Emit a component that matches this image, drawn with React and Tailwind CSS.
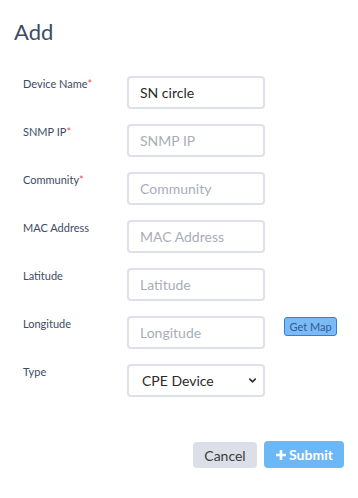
import React from "react";
import { ChevronDown } from "lucide-react";

const fields = [
  { label: "Device Name", required: true, value: "SN circle" },
  { label: "SNMP IP", required: true, placeholder: "SNMP IP" },
  { label: "Community", required: true, placeholder: "Community" },
  { label: "MAC Address", placeholder: "MAC Address" },
  { label: "Latitude", placeholder: "Latitude" },
  { label: "Longitude", placeholder: "Longitude", map: true },
];

const App = () => {
  return (
    <div
      className="w-[358px] h-[498px] bg-white px-[14px] pt-[18px] text-[#3c4b64]"
      style={{ fontFamily: "Lato, 'Open Sans', sans-serif" }}
    >
      <h1 className="text-[22px] leading-[28px] text-[#3c4b64]">Add</h1>

      <div className="mt-[30px] pl-[9px] flex flex-col gap-[15px]">
        {fields.map((f) => (
          <div key={f.label} className="flex items-start">
            <label className="w-[104px] pt-[1px] text-[11px] leading-[14px] text-[#3c4b64]">
              {f.label}
              {f.required && <span className="text-[#e55353]">*</span>}
            </label>
            <input
              defaultValue={f.value}
              placeholder={f.placeholder}
              className="w-[138px] h-[33px] rounded-[4px] border-2 border-[#dfe1ea] px-[11px] text-[14px] text-[#2a2a2a] placeholder:text-[#a8aeb7] outline-none"
            />
            {f.map && (
              <button className="ml-[19px] mt-[1px] h-[19px] w-[53px] rounded-[3px] border border-[#2f80d8] bg-[#7dbaf5] text-[11px] leading-[16px] text-[#2a5f99]">
                Get Map
              </button>
            )}
          </div>
        ))}

        <div className="flex items-start">
          <label className="w-[104px] pt-[1px] text-[11px] leading-[14px] text-[#3c4b64]">
            Type
          </label>
          <div className="w-[138px] h-[33px] rounded-[4px] border-2 border-[#dfe1ea] pl-[13px] pr-[5px] flex items-center justify-between text-[14px] text-[#2a2a2a]">
            <span>CPE Device</span>
            <ChevronDown size={11} strokeWidth={3.5} className="text-[#333]" />
          </div>
        </div>
      </div>

      <div className="mt-[44px] flex justify-end gap-[7px]">
        <button className="w-[64px] h-[26px] mt-[1px] rounded-[4px] bg-[#dcdfe8] text-[14px] text-[#3a3a3a]">
          Cancel
        </button>
        <button className="w-[80px] h-[27px] rounded-[4px] bg-[#6cb8f6] text-[14px] font-bold text-white flex items-center justify-center gap-[2px]">
          <svg width="12" height="12" viewBox="0 0 12 12" className="shrink-0">
            <path d="M6 1v10M1 6h10" stroke="white" strokeWidth="2.6" />
          </svg>
          Submit
        </button>
      </div>
    </div>
  );
};

export default App;
